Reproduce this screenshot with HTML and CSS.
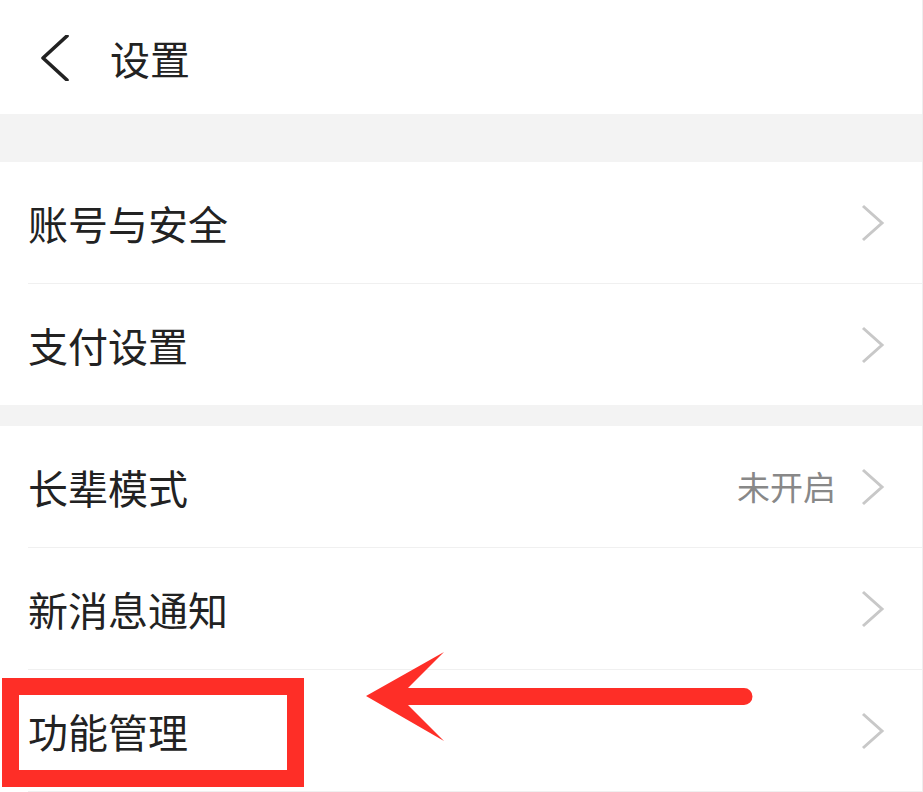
FILE: index.html
```html
<!DOCTYPE html>
<html lang="zh-CN">
<head>
<meta charset="utf-8">
<title>设置</title>
<link rel="stylesheet" href="styles.css">
</head>
<body>
<div class="page">
  <header class="header">
    <svg class="back" width="30" height="46" viewBox="0 0 30 46"><polyline points="27,1 3,23 27,45" fill="none" stroke="#222" stroke-width="3.6" stroke-linecap="round" stroke-linejoin="round"/></svg>
    <h1 class="title">设置</h1>
  </header>
  <div class="band band-lg"></div>
  <section class="group">
    <div class="row"><span class="label">账号与安全</span><span class="right"><svg class="chev" width="24" height="38" viewBox="0 0 24 38"><polyline points="2,2 21,19 2,36" fill="none" stroke="#c8c8c8" stroke-width="3"/></svg></span></div>
    <div class="row last"><span class="label">支付设置</span><span class="right"><svg class="chev" width="24" height="38" viewBox="0 0 24 38"><polyline points="2,2 21,19 2,36" fill="none" stroke="#c8c8c8" stroke-width="3"/></svg></span></div>
  </section>
  <div class="band band-sm"></div>
  <section class="group">
    <div class="row"><span class="label">长辈模式</span><span class="right"><span class="value">未开启</span><svg class="chev" width="24" height="38" viewBox="0 0 24 38"><polyline points="2,2 21,19 2,36" fill="none" stroke="#c8c8c8" stroke-width="3"/></svg></span></div>
    <div class="row"><span class="label">新消息通知</span><span class="right"><svg class="chev" width="24" height="38" viewBox="0 0 24 38"><polyline points="2,2 21,19 2,36" fill="none" stroke="#c8c8c8" stroke-width="3"/></svg></span></div>
    <div class="row"><span class="label">功能管理</span><span class="right"><svg class="chev" width="24" height="38" viewBox="0 0 24 38"><polyline points="2,2 21,19 2,36" fill="none" stroke="#c8c8c8" stroke-width="3"/></svg></span></div>
  </section>
  <div class="highlight"></div>
  <svg class="arrow" width="400" height="100" viewBox="360 645 400 100">
    <path d="M366 696 L444 652 L408 688 L744 688 A8.5 8.5 0 0 1 744 705 L408 705 L444 741 Z" fill="#fe2e27"/>
  </svg>
</div>
</body>
</html>
```

FILE: styles.css
```css
* { box-sizing: border-box; }
html, body { margin: 0; padding: 0; background: #fff; }
body {
  font-family: "Noto Sans CJK SC", "Noto Sans", sans-serif;
  color: #222;
}
.page {
  position: relative;
  width: 923px;
  height: 792px;
  overflow: hidden;
  background: #fff;
  border-right: 1px solid #eeeeee;
}
.header {
  height: 114px;
  display: flex;
  align-items: center;
  padding-left: 40px;
  padding-top: 2px;
}
.back { display: block; }
.title {
  margin: 0 0 0 40px;
  font-size: 40px;
  font-weight: 400;
  line-height: 1;
  color: #222;
}
.band { background: #f3f3f3; }
.band-lg { height: 48px; }
.band-sm { height: 21px; }
.group { background: #fff; }
.row {
  margin-left: 28px;
  height: 122px;
  border-bottom: 1px solid #f0f0f0;
  display: flex;
  align-items: center;
  justify-content: space-between;
  padding-right: 37px;
}
.row.last { border-bottom: none; height: 121px; }
.label {
  font-size: 40px;
  line-height: 1;
  color: #222;
}
.right {
  display: flex;
  align-items: center;
}
.value {
  font-size: 33px;
  line-height: 1;
  color: #888;
  margin-right: 25px;
}
.chev { display: block; }
.highlight {
  position: absolute;
  left: 2px;
  top: 678px;
  width: 302px;
  height: 109px;
  border: 17px solid #fe2e27;
}
.arrow {
  position: absolute;
  left: 360px;
  top: 645px;
}
```
